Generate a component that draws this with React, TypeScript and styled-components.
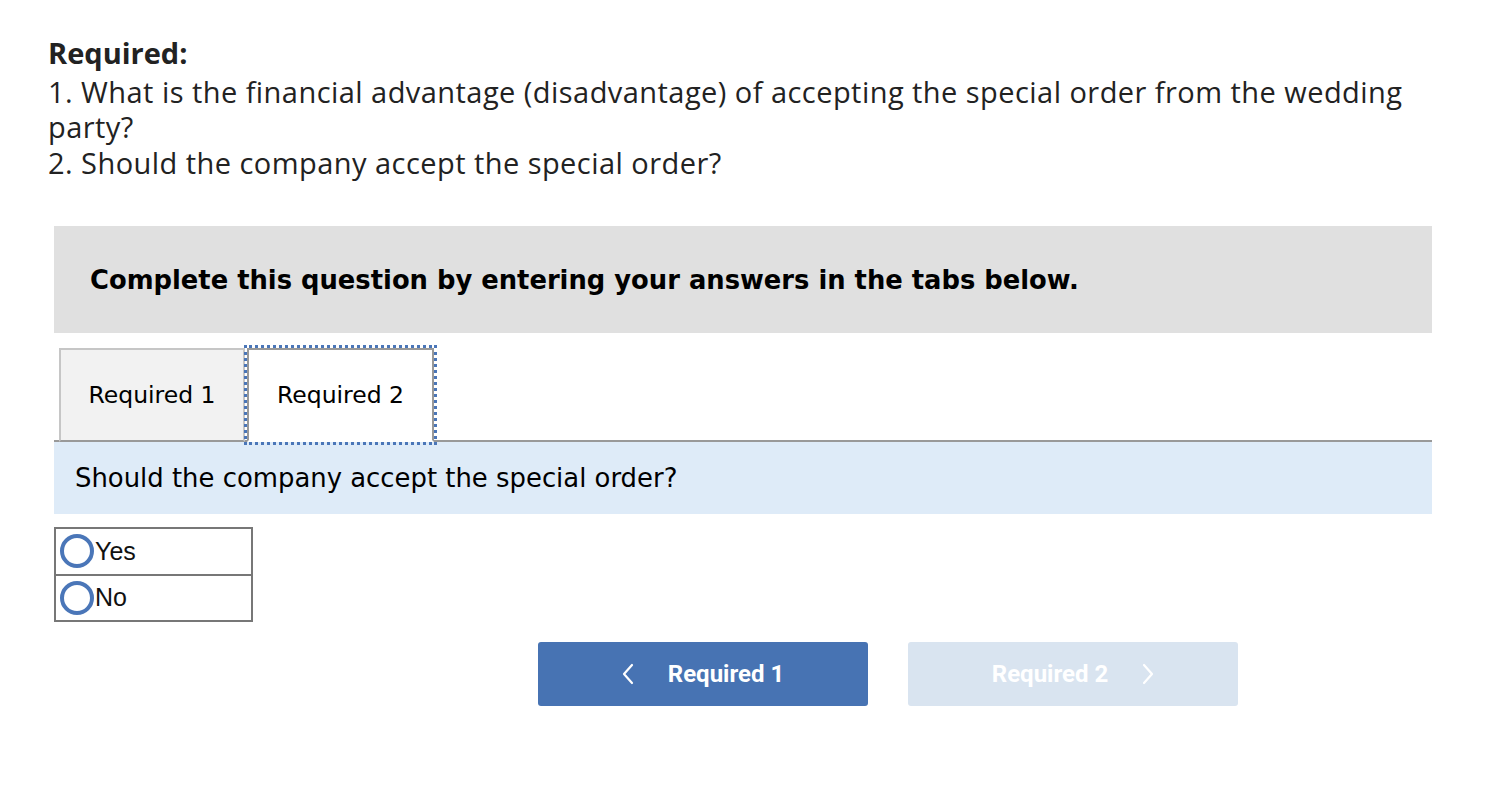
import styled, { createGlobalStyle } from "styled-components";

const GlobalStyle = createGlobalStyle`
  html, body {
    margin: 0;
    padding: 0;
    background: #ffffff;
  }
  body {
    font-family: "Open Sans", "Liberation Sans", sans-serif;
    color: #222222;
  }
`;

const Page = styled.div`
  width: 1504px;
  height: 790px;
  box-sizing: border-box;
  padding: 35px 72px 0 48px;
  overflow: hidden;
`;

const Instructions = styled.div`
  font-family: "Open Sans", "Liberation Sans", sans-serif;
  font-size: 29px;
  line-height: 35.5px;
  letter-spacing: 0.45px;
  color: #222222;
  margin: 0 0 46px 0;
`;

const Heading = styled.div`
  font-weight: 700;
  letter-spacing: 0;
  margin-bottom: 3px;
`;

const Panel = styled.div`
  margin-left: 6px;
  font-family: Tahoma, "DejaVu Sans", sans-serif;
`;

const Banner = styled.div`
  height: 107px;
  background: #e0e0e0;
  display: flex;
  align-items: center;
  padding-left: 36px;
  font-size: 25.8px;
  font-weight: 700;
  color: #000000;
`;

const TabBar = styled.div`
  display: flex;
  align-items: flex-end;
  margin-top: 15px;
  padding-left: 5px;
  border-bottom: 2px solid #999999;
`;

const Tab = styled.button<{ $active?: boolean }>`
  height: 94px;
  box-sizing: border-box;
  padding: 0 ${(p) => (p.$active ? "28px" : "27.5px")};
  margin-bottom: -2px;
  margin-left: ${(p) => (p.$active ? "2px" : "0")};
  font-family: Tahoma, "DejaVu Sans", sans-serif;
  font-size: 23.5px;
  color: #000000;
  background: ${(p) => (p.$active ? "#ffffff" : "#f2f2f2")};
  border: 2px solid ${(p) => (p.$active ? "#999999" : "#c6c6c6")};
  border-bottom: ${(p) => (p.$active ? "2px solid #ffffff" : "2px solid #999999")};
  outline: ${(p) => (p.$active ? "3px dotted #4a76b8" : "none")};
  outline-offset: 0;
  cursor: pointer;
`;

const Prompt = styled.div`
  height: 72px;
  background: #deebf8;
  display: flex;
  align-items: center;
  padding-left: 21px;
  font-size: 25.9px;
  color: #000000;
`;

const Options = styled.div`
  margin-top: 13px;
  width: 199px;
  border: 2px solid #777777;
  box-sizing: border-box;
`;

const Option = styled.label`
  display: flex;
  align-items: center;
  height: 44.5px;
  padding-left: 4px;
  font-family: "Liberation Sans", Arial, sans-serif;
  font-size: 25px;
  color: #111111;
  & + & {
    border-top: 2px solid #777777;
  }
`;

const Radio = styled.span`
  width: 26px;
  height: 26px;
  border: 4px solid #4a76b8;
  border-radius: 50%;
  margin-right: 1px;
  flex-shrink: 0;
`;

const NavRow = styled.div`
  display: flex;
  gap: 40px;
  margin-top: 20px;
  padding-left: 484px;
`;

const NavButton = styled.button<{ $disabled?: boolean }>`
  width: 330px;
  height: 64px;
  border: none;
  border-radius: 3px;
  background: ${(p) => (p.$disabled ? "#d9e4f0" : "#4773b3")};
  color: #ffffff;
  display: flex;
  align-items: center;
  justify-content: center;
  gap: 34px;
  font-family: Roboto, "Liberation Sans", sans-serif;
  font-size: 24px;
  font-weight: 700;
  letter-spacing: 0;
  cursor: ${(p) => (p.$disabled ? "default" : "pointer")};
`;

const Chevron = ({ dir }: { dir: "left" | "right" }) => (
  <svg width="12" height="22" viewBox="0 0 12 22" fill="none">
    <path
      d={dir === "left" ? "M10 2 L2 11 L10 20" : "M2 2 L10 11 L2 20"}
      stroke="#ffffff"
      strokeWidth="2.2"
      strokeLinecap="round"
      strokeLinejoin="round"
    />
  </svg>
);

const App = () => {
  return (
    <>
      <GlobalStyle />
      <Page>
        <Instructions>
          <Heading>Required:</Heading>
          <div>
            1. What is the financial advantage (disadvantage) of accepting the special order from the wedding party?
          </div>
          <div>2. Should the company accept the special order?</div>
        </Instructions>
        <Panel>
          <Banner>Complete this question by entering your answers in the tabs below.</Banner>
          <TabBar>
            <Tab>Required 1</Tab>
            <Tab $active>Required 2</Tab>
          </TabBar>
          <Prompt>Should the company accept the special order?</Prompt>
          <Options>
            <Option>
              <Radio />
              Yes
            </Option>
            <Option>
              <Radio />
              No
            </Option>
          </Options>
          <NavRow>
            <NavButton>
              <Chevron dir="left" />
              <span>Required 1</span>
            </NavButton>
            <NavButton $disabled disabled>
              <span>Required 2</span>
              <Chevron dir="right" />
            </NavButton>
          </NavRow>
        </Panel>
      </Page>
    </>
  );
};

export default App;
